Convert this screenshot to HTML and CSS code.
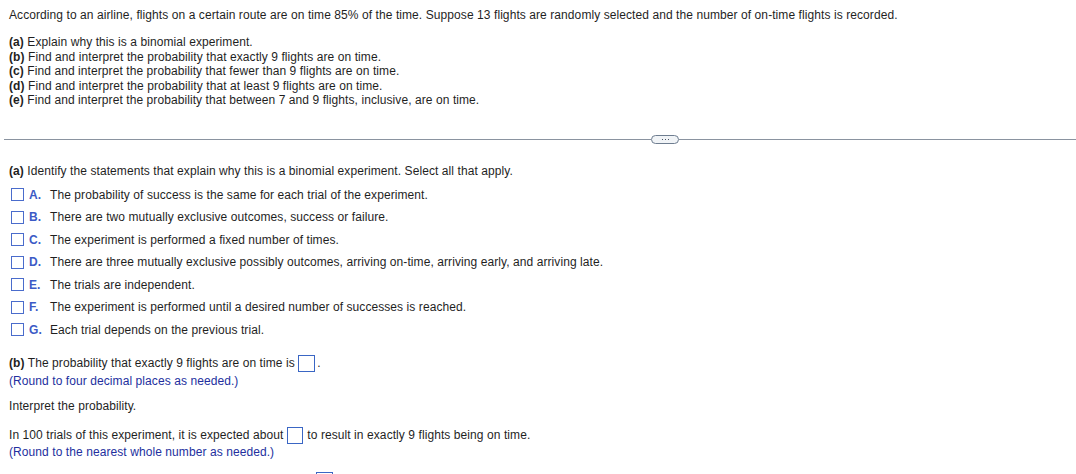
FILE: index.html
```
<!DOCTYPE html>
<html>
<head>
<meta charset="utf-8">
<link rel="stylesheet" href="styles.css">
</head>
<body>
<div class="page">
  <div class="intro">
    <p class="lead">According to an airline, flights on a certain route are on time 85% of the time. Suppose 13 flights are randomly selected and the number of on-time flights is recorded.</p>
    <div class="parts">
      <div><b>(a)</b> Explain why this is a binomial experiment.</div>
      <div><b>(b)</b> Find and interpret the probability that exactly 9 flights are on time.</div>
      <div><b>(c)</b> Find and interpret the probability that fewer than 9 flights are on time.</div>
      <div><b>(d)</b> Find and interpret the probability that at least 9 flights are on time.</div>
      <div><b>(e)</b> Find and interpret the probability that between 7 and 9 flights, inclusive, are on time.</div>
    </div>
  </div>
  <div class="sep">
    <div class="sep-line left"></div>
    <div class="pill"><span></span><span></span><span></span></div>
    <div class="sep-line right"></div>
  </div>
  <div class="answer">
    <p class="q"><b>(a)</b> Identify the statements that explain why this is a binomial experiment. Select all that apply.</p>
    <ul class="options">
      <li><span class="cb"></span><span class="lt">A.</span><span>The probability of success is the same for each trial of the experiment.</span></li>
      <li><span class="cb"></span><span class="lt">B.</span><span>There are two mutually exclusive outcomes, success or failure.</span></li>
      <li><span class="cb"></span><span class="lt">C.</span><span>The experiment is performed a fixed number of times.</span></li>
      <li><span class="cb"></span><span class="lt">D.</span><span>There are three mutually exclusive possibly outcomes, arriving on-time, arriving early, and arriving late.</span></li>
      <li><span class="cb"></span><span class="lt">E.</span><span>The trials are independent.</span></li>
      <li><span class="cb"></span><span class="lt">F.</span><span>The experiment is performed until a desired number of successes is reached.</span></li>
      <li><span class="cb"></span><span class="lt">G.</span><span>Each trial depends on the previous trial.</span></li>
    </ul>
    <div class="bpart">
      <div class="line"><b>(b)</b> The probability that exactly 9 flights are on time is <span class="box"></span>.</div>
      <div class="hint">(Round to four decimal places as needed.)</div>
    </div>
    <p class="interp">Interpret the probability.</p>
    <div class="bpart two">
      <div class="line">In 100 trials of this experiment, it is expected about <span class="box"></span> to result in exactly 9 flights being on time.</div>
      <div class="hint">(Round to the nearest whole number as needed.)</div>
    </div>
    <div class="cut"><span class="box"></span></div>
  </div>
</div>
</body>
</html>
```

FILE: styles.css
```
html, body {
  margin: 0;
  padding: 0;
  background: #fff;
}
body {
  font-family: "Liberation Sans", Arial, sans-serif;
  font-size: 12px;
  letter-spacing: 0.08px;
  color: #1f1f1f;
  overflow: hidden;
  height: 474px;
}
.page {
  width: 1076px;
}
p { margin: 0; }
b { font-weight: bold; }
.intro {
  padding: 8px 0 0 9px;
}
.lead {
  line-height: 14px;
}
.parts {
  margin-top: 13px;
  line-height: 14.5px;
}
.sep {
  display: flex;
  align-items: center;
  margin-top: 27px;
  padding-left: 4px;
  height: 9px;
}
.sep-line {
  height: 1px;
  background: #8a93a0;
}
.sep-line.left { width: 647px; }
.sep-line.right { flex: 1; }
.pill {
  box-sizing: border-box;
  width: 28px;
  height: 9px;
  border: 1px solid #6e7d90;
  border-radius: 5px;
  background: #f1f4f7;
  display: flex;
  align-items: center;
  justify-content: center;
  gap: 2px;
}
.pill span {
  width: 1px;
  height: 1px;
  background: #4a5566;
}
.answer {
  padding-left: 9px;
  padding-top: 20px;
}
.q {
  line-height: 14px;
}
.options {
  list-style: none;
  margin: 6px 0 0 0;
  padding: 0;
}
.options li {
  display: flex;
  align-items: center;
  height: 22.5px;
}
.cb {
  box-sizing: border-box;
  width: 13px;
  height: 13px;
  border: 1px solid #4a6ccc;
  margin-left: 2px;
  margin-right: 5px;
}
.lt {
  color: #3c5ac6;
  font-weight: bold;
  width: 21px;
}
.bpart {
  margin-top: 13px;
}
.bpart .line {
  display: flex;
  align-items: center;
  height: 18px;
  white-space: pre;
}
.box {
  display: inline-block;
  box-sizing: border-box;
  width: 17px;
  height: 17px;
  border: 1px solid #3a66c4;
  margin: 0 2px 0 0;
  vertical-align: middle;
}
.hint {
  color: #232f9e;
  line-height: 14px;
  margin-top: 2px;
}
.interp {
  margin-top: 11px;
  line-height: 14px;
}
.bpart.two {
  margin-top: 13px;
}
.bpart.two .hint {
  margin-top: 1px;
}
.bpart.two .box {
  width: 16px;
  margin: 0 1px 0 0;
}
.cut {
  margin-top: 13px;
  padding-left: 307px;
}
```
